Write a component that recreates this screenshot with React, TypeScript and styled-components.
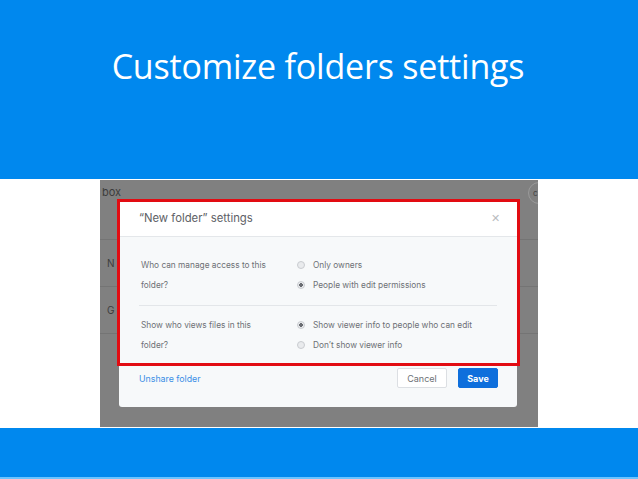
import React from "react";
import styled, { createGlobalStyle } from "styled-components";

const Global = createGlobalStyle`
  html, body { margin: 0; padding: 0; background: #ffffff; }
  body { width: 638px; height: 479px; overflow: hidden; }
`;

const Slide = styled.div`
  width: 638px;
  height: 479px;
  display: flex;
  flex-direction: column;
  background: #ffffff;
`;

const Banner = styled.header`
  height: 179px;
  background: #0088ee;
  display: flex;
  justify-content: center;
  padding-top: 43px;
  padding-right: 2px;
  box-sizing: border-box;
`;

const Title = styled.h1`
  margin: 0;
  font-family: "Open Sans", "Lato", sans-serif;
  font-weight: 400;
  font-size: 34px;
  line-height: 46px;
  color: #ffffff;
  letter-spacing: -0.2px;
`;

const Middle = styled.main`
  height: 249px;
  padding: 1px 0 0 100px;
  box-sizing: border-box;
`;

const Shot = styled.div`
  position: relative;
  width: 438px;
  height: 247px;
  background: #808080;
  overflow: hidden;
  font-family: "Inter", "Liberation Sans", sans-serif;
`;

const AppHeader = styled.div`
  height: 60px;
  display: flex;
  align-items: flex-start;
  justify-content: space-between;
  box-sizing: border-box;
  padding: 3px 0 0 2px;
  border-bottom: 1px solid #747474;
`;

const AppLogo = styled.span`
  font-size: 11px;
  color: #3c3c3c;
  line-height: 18px;
`;

const AppCircle = styled.span`
  width: 22px;
  height: 22px;
  margin-right: -12px;
  margin-top: -1px;
  border-radius: 50%;
  border: 1px solid #9a9a9a;
  box-sizing: border-box;
  font-size: 8px;
  color: #444;
  display: flex;
  align-items: center;
  padding-left: 4px;
`;

const AppRow = styled.div`
  height: 46px;
  display: flex;
  align-items: center;
  padding-left: 7px;
  font-size: 10px;
  color: #3c3c3c;
  border-bottom: 1px solid #747474;
`;

const Modal = styled.section`
  position: absolute;
  left: 19px;
  top: 20px;
  width: 398px;
  height: 207px;
  background: #f7f9fa;
  border-radius: 3px;
  display: flex;
  flex-direction: column;
  overflow: hidden;
`;

const ModalHeader = styled.div`
  height: 37px;
  background: #ffffff;
  border-bottom: 1px solid #e4e7ea;
  box-sizing: border-box;
  display: flex;
  align-items: center;
  justify-content: space-between;
  padding: 0 17px 0 20px;
`;

const ModalTitle = styled.h2`
  margin: 0;
  font-size: 11.3px;
  font-weight: 400;
  color: #5e6166;
`;

const Close = styled.span`
  font-size: 11px;
  color: #b9bcc0;
  line-height: 1;
`;

const ModalBody = styled.div`
  padding: 18px 20px 0 20px;
  display: flex;
  flex-direction: column;
`;

const Setting = styled.div`
  display: grid;
  grid-template-columns: 158px 1fr;
  font-size: 8.3px;
  line-height: 20px;
  color: #6d7075;
`;

const Label = styled.div`
  padding-left: 2px;
  width: 130px;
`;

const Options = styled.div`
  display: flex;
  flex-direction: column;
`;

const Option = styled.label`
  display: flex;
  align-items: center;
  gap: 8px;
  height: 20px;
`;

const Radio = styled.span<{ $on?: boolean }>`
  width: 8px;
  height: 8px;
  border-radius: 50%;
  box-sizing: border-box;
  border: 1px solid #c9ccd0;
  background: ${(p) => (p.$on ? "radial-gradient(circle, #6a6d72 0 1.6px, #e9ebed 2px)" : "#e9ebed")};
`;

const Divider = styled.hr`
  border: 0;
  border-top: 1px solid #e3e6e9;
  margin: 10px 0 9px 0;
`;

const Footer = styled.div`
  display: flex;
  align-items: center;
  padding: 13px 19px 0 20px;
  gap: 11px;
`;

const Link = styled.a`
  flex: 1;
  font-size: 8.8px;
  color: #3a8ee6;
  text-decoration: none;
`;

const Button = styled.button<{ $primary?: boolean }>`
  height: 20px;
  padding: 0;
  width: ${(p) => (p.$primary ? "40px" : "50px")};
  border-radius: 2px;
  font-family: "Inter", "Liberation Sans", sans-serif;
  font-size: 9px;
  font-weight: ${(p) => (p.$primary ? 700 : 400)};
  color: ${(p) => (p.$primary ? "#ffffff" : "#6d7075")};
  background: ${(p) => (p.$primary ? "#0e6fdc" : "#ffffff")};
  border: 1px solid ${(p) => (p.$primary ? "#0e6fdc" : "#dcdfe3")};
`;

const Highlight = styled.div`
  position: absolute;
  left: 17px;
  top: 19px;
  width: 403px;
  height: 167px;
  border: 3px solid #e20c12;
  box-sizing: border-box;
  pointer-events: none;
`;

const BottomBar = styled.footer`
  height: 51px;
  background: #0088ee;
  border-bottom: 2px solid #6cc4ff;
  box-sizing: border-box;
`;

export default function App() {
  return (
    <Slide>
      <Global />
      <Banner>
        <Title>Customize folders settings</Title>
      </Banner>
      <Middle>
        <Shot>
          <AppHeader>
            <AppLogo>box</AppLogo>
            <AppCircle>c</AppCircle>
          </AppHeader>
          <AppRow>N</AppRow>
          <AppRow>G</AppRow>
          <Modal>
            <ModalHeader>
              <ModalTitle>“New folder” settings</ModalTitle>
              <Close>✕</Close>
            </ModalHeader>
            <ModalBody>
              <Setting>
                <Label>Who can manage access to this folder?</Label>
                <Options>
                  <Option>
                    <Radio />
                    Only owners
                  </Option>
                  <Option>
                    <Radio $on />
                    People with edit permissions
                  </Option>
                </Options>
              </Setting>
              <Divider />
              <Setting>
                <Label>Show who views files in this folder?</Label>
                <Options>
                  <Option>
                    <Radio $on />
                    Show viewer info to people who can edit
                  </Option>
                  <Option>
                    <Radio />
                    Don’t show viewer info
                  </Option>
                </Options>
              </Setting>
            </ModalBody>
            <Footer>
              <Link>Unshare folder</Link>
              <Button>Cancel</Button>
              <Button $primary>Save</Button>
            </Footer>
          </Modal>
          <Highlight />
        </Shot>
      </Middle>
      <BottomBar />
    </Slide>
  );
}
